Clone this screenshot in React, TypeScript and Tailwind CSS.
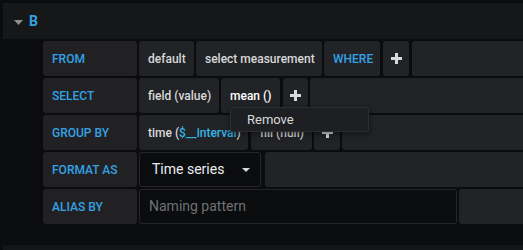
const font = { fontFamily: "Roboto, 'Liberation Sans', sans-serif" };

const Label = ({ text }: { text: string }) => (
    <div className="w-[94px] shrink-0 rounded-[3px] bg-[#212124] flex items-center pl-[9px] text-[12px] font-medium text-[#33a2e5]">
        {text}
    </div>
);

const Seg = ({ children, w }: { children: React.ReactNode; w: string }) => (
    <div className={`${w} shrink-0 rounded-[3px] bg-[#222326] flex items-center pl-[9px] text-[12px] font-medium text-[#d8d9da] whitespace-nowrap overflow-hidden`}>
        {children}
    </div>
);

const Plus = ({ w }: { w: string }) => (
    <div className={`${w} shrink-0 rounded-[3px] bg-[#222326] flex items-center justify-center text-[#d8d9da]`}>
        <svg width="11" height="11" viewBox="0 0 11 11">
            <rect x="4" y="0" width="3" height="11" fill="currentColor" />
            <rect x="0" y="4" width="11" height="3" fill="currentColor" />
        </svg>
    </div>
);

const Fill = ({ m = "" }: { m?: string }) => <div className={`${m} flex-1 rounded-l-[3px] bg-[#222326]`} />;

export default function App() {
    return (
        <div className="w-[523px] h-[250px] bg-[#0b0c0e] overflow-hidden relative" style={font}>
            {/* header */}
            <div className="ml-[3px] mt-[3px] h-[36px] bg-[#161719] flex items-center pl-[11px] gap-[6px]">
                <svg width="9" height="5" viewBox="0 0 9 5" className="mt-[2px]">
                    <path d="M0 0 L9 0 L4.5 5 Z" fill="#8e8e8e" />
                </svg>
                <span className="text-[14px] font-bold text-[#33a2e5]">B</span>
            </div>

            <div className="ml-[43px] mt-[2px] flex flex-col gap-[2px]">
                {/* FROM */}
                <div className="h-[35px] flex gap-[2px]">
                    <Label text="FROM" />
                    <Seg w="w-[55px]">default</Seg>
                    <Seg w="w-[126px]">select measurement</Seg>
                    <div className="w-[56px] shrink-0 rounded-[3px] bg-[#222326] flex items-center pl-[9px] text-[12px] font-medium text-[#33a2e5]">
                        WHERE
                    </div>
                    <div className="ml-px flex">
                        <Plus w="w-[26px]" />
                    </div>
                    <Fill m="ml-px" />
                </div>
                {/* SELECT */}
                <div className="h-[35px] flex gap-[2px]">
                    <Label text="SELECT" />
                    <Seg w="w-[80px]">field (value)</Seg>
                    <Seg w="w-[59px]">
                        <span className="text-white">mean ()</span>
                    </Seg>
                    <div className="ml-px flex">
                        <Plus w="w-[25px]" />
                    </div>
                    <Fill />
                </div>
                {/* GROUP BY */}
                <div className="h-[35px] flex gap-[2px]">
                    <Label text="GROUP BY" />
                    <Seg w="w-[109px]">
                        time (<span className="text-[#33b5e5]">$__interval</span>)
                    </Seg>
                    <div className="ml-px flex">
                        <Seg w="w-[61px]">fill (null)</Seg>
                    </div>
                    <Plus w="w-[26px]" />
                    <Fill />
                </div>
                {/* FORMAT AS */}
                <div className="h-[35px] flex gap-[2px]">
                    <Label text="FORMAT AS" />
                    <div className="w-[122px] shrink-0 rounded-[3px] bg-[#0b0c0e] border border-[#262628] flex items-center pl-[12px] pr-[10px] text-[14px] text-[#e9edf2]">
                        <span className="flex-1">Time series</span>
                        <svg width="8" height="4" viewBox="0 0 8 4">
                            <path d="M0 0 L8 0 L4 4 Z" fill="#d8d9da" />
                        </svg>
                    </div>
                    <Fill m="ml-[2px]" />
                </div>
                {/* ALIAS BY */}
                <div className="h-[35px] flex gap-[2px]">
                    <Label text="ALIAS BY" />
                    <div className="w-[318px] shrink-0 rounded-[3px] bg-[#0b0c0e] border border-[#262628] flex items-center pl-[9px] text-[14px] text-[#6f7073]">
                        Naming pattern
                    </div>
                    <Fill />
                </div>
            </div>

            <div className="ml-[3px] mt-[21px] h-[10px] bg-[#141517]" />

            {/* context menu */}
            <div className="absolute left-[230px] top-[107px] w-[139px] h-[25px] bg-[#1e1f22] border border-[#2c2d30] rounded-[2px] flex items-center pl-[16px] text-[13px] text-[#d8d9da] shadow-[0_2px_6px_rgba(0,0,0,0.5)]">
                Remove
            </div>
        </div>
    );
}
